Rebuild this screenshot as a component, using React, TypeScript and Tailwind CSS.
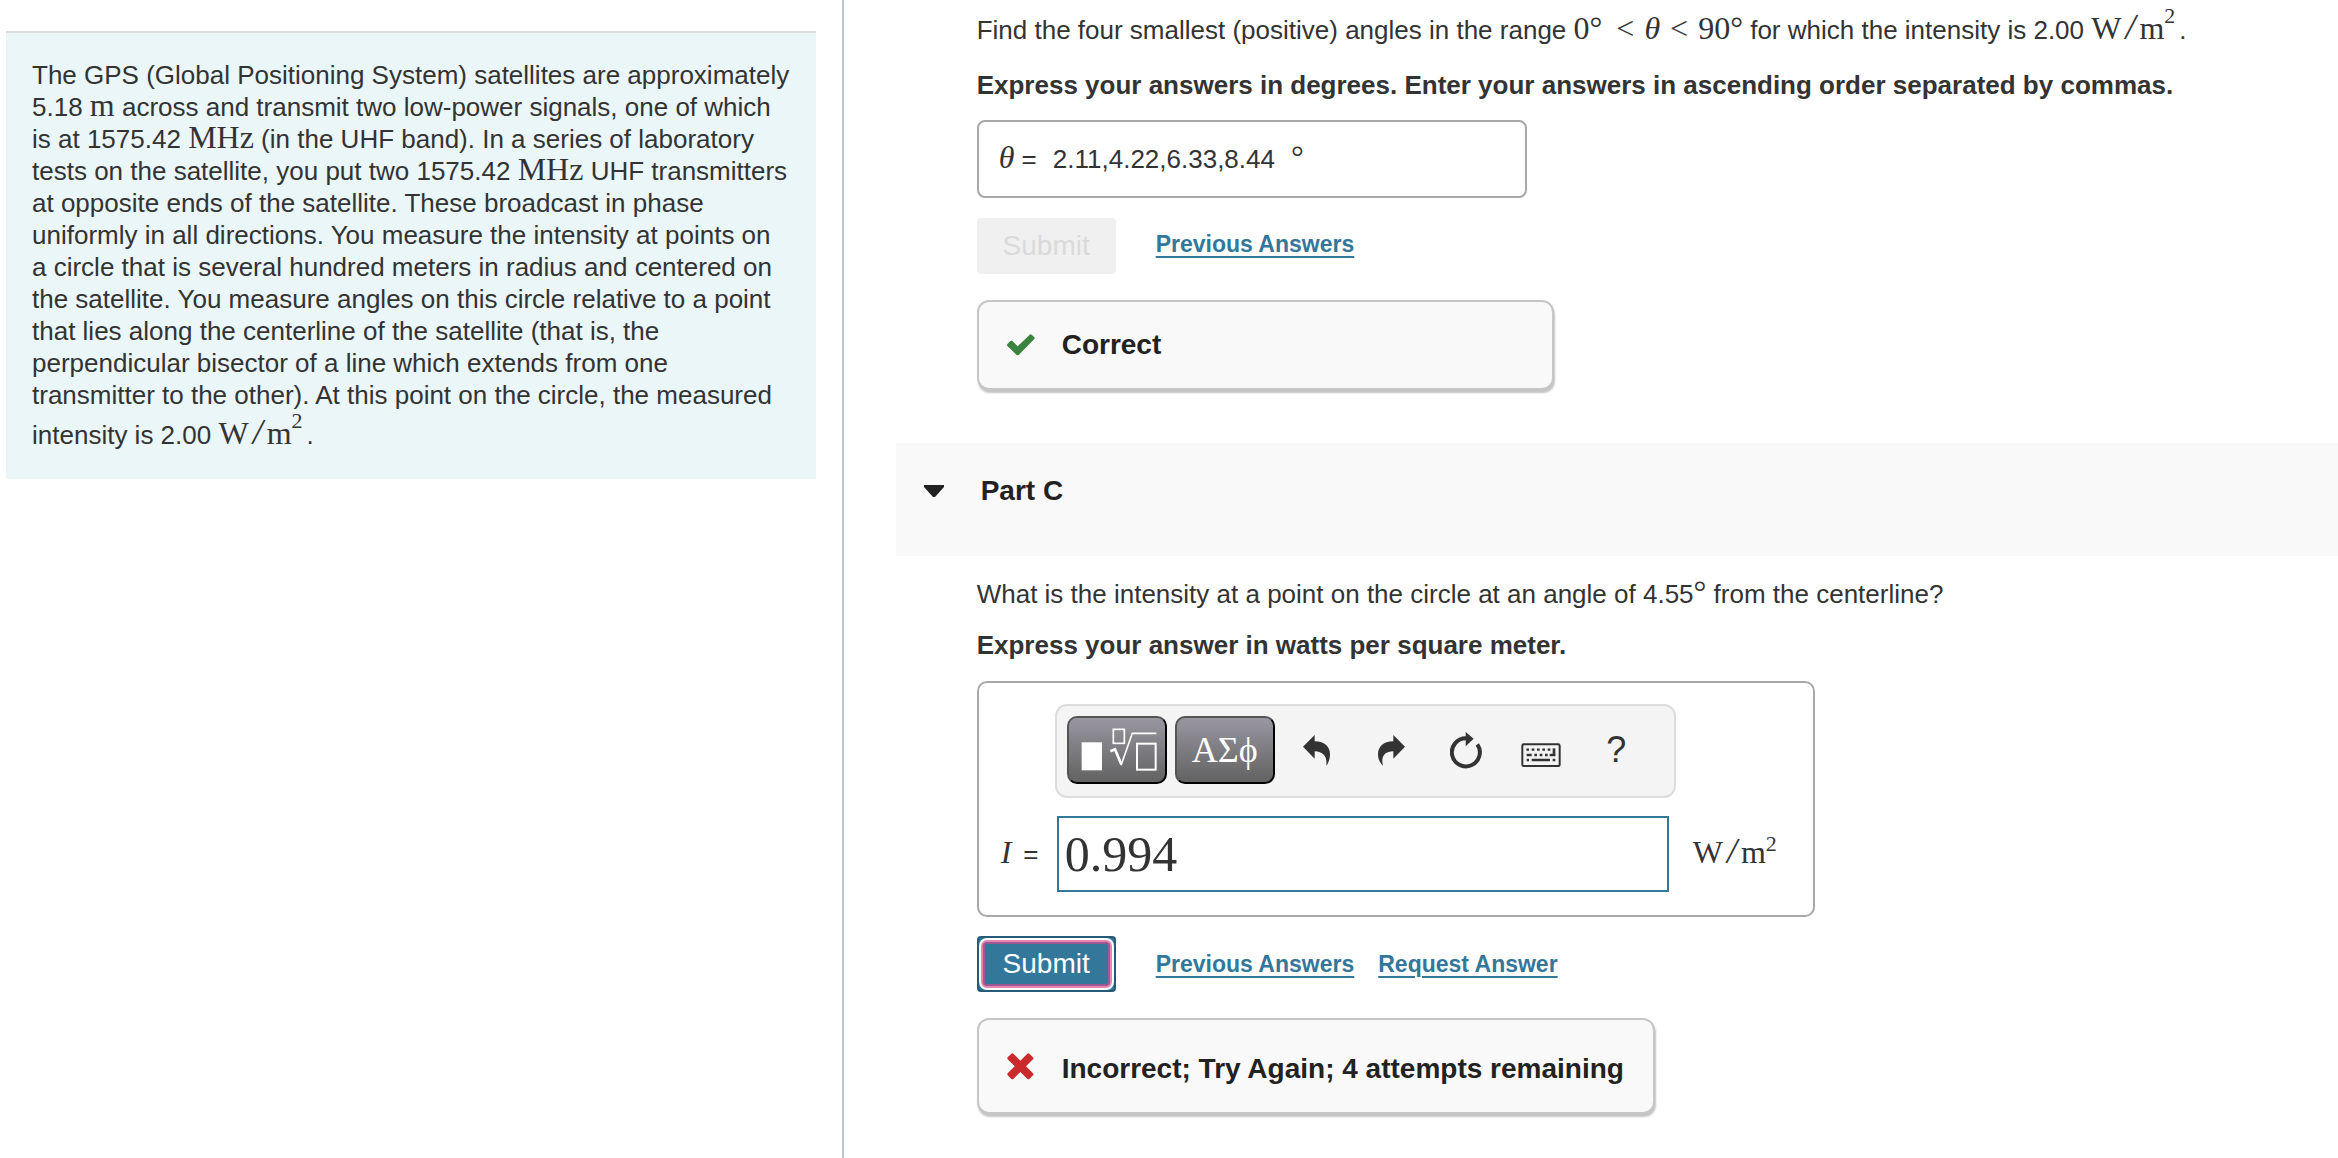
import React from 'react';

interface FeedbackProps {
  icon: React.ReactNode;
  className: string;
  children: React.ReactNode;
}

const Unit = ({ children }: { children: React.ReactNode }) => (
  <span className="font-['Liberation_Serif',serif] text-[32px] leading-0">{children}</span>
);

const WattsPerSquareMeter = ({ supClassName = '-top-4' }: { supClassName?: string }) => (
  <Unit>
    W<span className="mx-1 text-[36px] italic leading-0">/</span>m
    <sup className={`text-[22px] leading-0 ${supClassName}`}>2</sup>
  </Unit>
);

const Feedback: React.FC<FeedbackProps> = ({ icon, className, children }) => (
  <div
    className={`flex items-center rounded-xl border-2 border-[#c6c6c6] bg-[#f9f9f9] pl-7 text-[28px] font-bold leading-8 text-[#222] shadow-[1px_3px_2px_#c4c4c4] ${className}`}
  >
    <span className="w-[55px] shrink-0">{icon}</span>
    {children}
  </div>
);

const CheckIcon = () => (
  <svg width="28" height="22" viewBox="0 0 84 66" fill="#3a8340" aria-hidden="true">
    <path d="M0 33Q0 31 2 29L10 21Q13 19 16 21L32 37 68 2Q71 0 74 2L82 10Q84 12 82 15L35 63Q32 65 29 63L2 37Q0 35 0 33Z" />
  </svg>
);

const CrossIcon = () => (
  <svg width="27" height="27" viewBox="0 0 81 81" fill="#cb2a2d" aria-hidden="true">
    <path d="M13 2Q16 0 19 2L40 23 61 2Q64 0 67 2L78 13Q81 16 78 19L57 40 78 61Q81 64 78 67L67 78Q64 80 61 78L40 57 19 78Q16 80 13 78L2 67Q0 64 2 61L23 40 2 19Q0 16 2 13Z" />
  </svg>
);

const TemplateIcon = () => (
  <svg width="76" height="44" viewBox="0 0 228 132" fill="none" stroke="#fff" aria-hidden="true">
    <rect x="2" y="43" width="61" height="84" fill="#fff" stroke="none" />
    <rect x="97" y="4" width="33" height="42" strokeWidth="5" />
    <path d="M88 70 102 64 121 109" strokeWidth="8" />
    <path d="M120 112 154 16H226" strokeWidth="5" />
    <rect x="168" y="47" width="56" height="78" strokeWidth="6" />
  </svg>
);

const UndoIcon = () => (
  <svg width="27" height="31" viewBox="0 0 81 93" fill="#333" aria-hidden="true">
    <path d="M0 35 35 0V19C66 19 81 36 81 58C81 72 77 83 70 92C73 65 62 50 35 49V71Z" />
  </svg>
);

const RedoIcon = () => (
  <svg width="27" height="31" viewBox="0 0 81 93" fill="#333" aria-hidden="true">
    <path d="M81 35 46 0V19C15 19 0 36 0 58C0 72 5 83 15 92C8 65 19 50 46 49V71Z" />
  </svg>
);

const ResetIcon = () => (
  <svg width="32" height="37" viewBox="0 0 96 111" aria-hidden="true">
    <path d="M48 19A42 42 0 1 0 82 37" fill="none" stroke="#333" strokeWidth="12" />
    <path d="M47 0 71 20 47 43Z" fill="#333" />
  </svg>
);

const KeyboardIcon = () => (
  <svg width="40" height="24" viewBox="0 0 120 72" fill="none" stroke="#333" aria-hidden="true">
    <rect x="4" y="4" width="112" height="65" rx="4" strokeWidth="6" />
    <path d="M16 20H96" strokeWidth="7" strokeDasharray="8 8" />
    <path d="M17 36H32M40 36H48M56 36H64M72 36H80M86 36H103" strokeWidth="7" />
    <path d="M99 16V38" strokeWidth="8" />
    <path d="M17 51H24M32 51H87M95 51H103" strokeWidth="7" />
  </svg>
);

const linkClass = 'text-[23px] font-bold leading-8 text-[#33779b] underline decoration-2 underline-offset-4';
const symbolButtonClass =
  "flex h-[68px] w-[100px] items-center justify-center rounded-[10px] border-2 border-t-[#555] border-r-black border-b-black border-l-[#555] bg-linear-to-b from-[#9a97a1] to-[#626262] font-['Liberation_Serif',serif] text-4xl text-white";
const toolButtonClass = 'flex h-[68px] w-[75px] items-center justify-center';

export default function App() {
  return (
    <div className="flex min-h-screen bg-white font-['Liberation_Sans',sans-serif] text-[26px] leading-8 text-[#333]">
      <aside className="w-[36%] shrink-0 pt-[31px] pr-[26px] pl-1.5">
        <p className="border-t-2 border-[#dcdcdc] bg-[#eaf6f8] px-[26px] pt-[26px] pb-7">
          The GPS (Global Positioning System) satellites are approximately 5.18 <Unit>m</Unit> across and transmit two
          low-power signals, one of which is at 1575.42 <Unit>MHz</Unit> (in the UHF band). In a series of laboratory
          tests on the satellite, you put two 1575.42 <Unit>MHz</Unit> UHF transmitters at opposite ends of the
          satellite. These broadcast in phase uniformly in all directions. You measure the intensity at points on a
          circle that is several hundred meters in radius and centered on the satellite. You measure angles on this
          circle relative to a point that lies along the centerline of the satellite (that is, the perpendicular
          bisector of a line which extends from one transmitter to the other). At this point on the circle, the measured
          <span className="block pt-2">
            intensity is 2.00 <WattsPerSquareMeter /><span className="ml-1">.</span>
          </span>
        </p>
      </aside>

      <main className="min-w-0 flex-1 border-l-2 border-[#bbc8da] pl-[52px]">
        {/* Part B */}
        <section className="pt-3.5 pl-[81px]">
          <p>
            Find the four smallest (positive) angles in the range{' '}
            <Unit>
              0° <span className="mr-0.5 ml-1.5">&lt;</span> <i>θ</i> <span className="mx-0.5">&lt;</span> 90°
            </Unit>{' '}
            for which the intensity is 2.00 <WattsPerSquareMeter /><span className="ml-1">.</span>
          </p>
          <p className="mt-[23px] font-bold">
            Express your answers in degrees. Enter your answers in ascending order separated by commas.
          </p>
          <div className="mt-[19px] flex h-[78px] w-[550px] items-center rounded-lg border-2 border-[#a8a8a8] px-5">
            <span>
              <Unit><i>θ</i></Unit> =
            </span>
            <span className="ml-4">2.11,4.22,6.33,8.44</span>
            <span className="ml-4"><Unit>°</Unit></span>
          </div>
          <div className="mt-5 flex items-center gap-10">
            <button disabled className="h-14 w-[139px] rounded bg-[#f0f0f0] text-[28px] text-[#dadada]">
              Submit
            </button>
            <a href="#previous-b" className={`${linkClass} pb-1`}>Previous Answers</a>
          </div>
          <Feedback icon={<CheckIcon />} className="mt-[26px] h-[90px] w-[577px]">Correct</Feedback>
        </section>

        {/* Part C */}
        <section className="mt-[53px]">
          <h2 className="h-[113px] bg-[#f9f9f9] pt-8 text-[28px] font-bold text-[#222]">
            <button className="flex items-center gap-[37px] pl-7">
              <svg width="20" height="12" viewBox="0 0 20 12" fill="#222" aria-hidden="true">
                <path d="M0 0H20V2L11 12H9L0 2Z" />
              </svg>
              Part C
            </button>
          </h2>
          <div className="pt-[22px] pl-[81px]">
            <p>
              What is the intensity at a point on the circle at an angle of 4.55<Unit>°</Unit> from the centerline?
            </p>
            <p className="mt-[19px] font-bold">Express your answer in watts per square meter.</p>
            <div className="mt-5 h-[236px] w-[838px] rounded-[10px] border-2 border-[#a8a8a8] pt-[21px] pl-5">
              <div className="ml-14 flex h-[94px] w-[621px] gap-1 rounded-xl border-2 border-[#dcdcdc] bg-[#f4f4f4] p-2.5">
                <div className="flex gap-2">
                  <button className={`${symbolButtonClass} pl-1`} aria-label="Templates">
                    <TemplateIcon />
                  </button>
                  <button className={symbolButtonClass}>ΑΣϕ</button>
                </div>
                <div className="flex">
                  <button className={toolButtonClass} aria-label="Undo"><UndoIcon /></button>
                  <button className={toolButtonClass} aria-label="Redo"><RedoIcon /></button>
                  <button className={toolButtonClass} aria-label="Reset"><ResetIcon /></button>
                  <button className={`${toolButtonClass} pt-2.5`} aria-label="Keyboard shortcuts"><KeyboardIcon /></button>
                  <button className={`${toolButtonClass} text-4xl`}>?</button>
                </div>
              </div>
              <div className="mt-[18px] flex items-center">
                <label htmlFor="intensity" className="flex w-[58px] items-baseline gap-3 pl-0.5">
                  <Unit><i>I</i></Unit>
                  <span>=</span>
                </label>
                <input
                  id="intensity"
                  defaultValue="0.994"
                  className="h-[76px] w-[612px] border-2 border-[#33779b] px-1.5 font-['Liberation_Serif',serif] text-[50px] outline-none"
                />
                <span className="ml-6"><WattsPerSquareMeter supClassName="-top-3" /></span>
              </div>
            </div>
            <div className="mt-[19px] flex items-center">
              <button className="h-14 w-[139px] rounded border-2 border-[#265b75] bg-[#33779b] text-[28px] text-white">
                <span className="flex h-full rounded-lg bg-white p-0.5">
                  <span className="flex flex-1 items-center justify-center rounded-md border-2 border-[#e687b2] bg-[#33779b] inset-ring-2 inset-ring-[#9d5a92]">
                    Submit
                  </span>
                </span>
              </button>
              <a href="#previous-c" className={`${linkClass} ml-10`}>Previous Answers</a>
              <a href="#request" className={`${linkClass} ml-6`}>Request Answer</a>
            </div>
            <Feedback icon={<CrossIcon />} className="mt-[26px] h-24 w-[678px]">
              <span className="pt-1.5">Incorrect; Try Again; 4 attempts remaining</span>
            </Feedback>
          </div>
        </section>
      </main>
    </div>
  );
}
